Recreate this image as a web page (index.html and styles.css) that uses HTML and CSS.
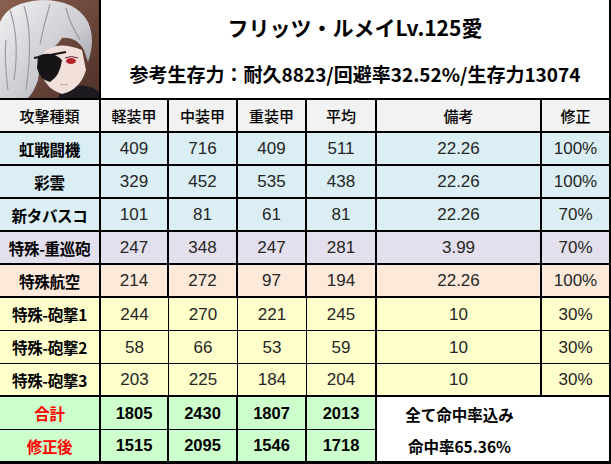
FILE: index.html
```html
<!DOCTYPE html>
<html lang="ja">
<head>
<meta charset="utf-8">
<title>フリッツ・ルメイ</title>
<link rel="stylesheet" href="styles.css">
</head>
<body>
<div class="sheet">
  <div class="top">
    <div class="portrait">
      <svg viewBox="0 0 99 98" width="99" height="98" aria-hidden="true">
        <defs>
          <linearGradient id="bg" x1="0" y1="0" x2="1" y2="1">
            <stop offset="0" stop-color="#8a6050"/>
            <stop offset="1" stop-color="#4e3128"/>
          </linearGradient>
          <linearGradient id="hair" x1="0" y1="0" x2="1" y2="1">
            <stop offset="0" stop-color="#f2f2f4"/>
            <stop offset="0.6" stop-color="#c9c9cf"/>
            <stop offset="1" stop-color="#8d8d96"/>
          </linearGradient>
        </defs>
        <rect width="99" height="98" fill="url(#bg)"/>
        <path d="M58 98 Q62 88 74 86 Q90 84 99 92 L99 98 Z" fill="#1d1b1f"/>
        <path d="M40 52 Q58 40 82 50 L86 70 Q80 90 62 94 Q48 90 42 76 Z" fill="#f1dfd9"/>
        <path d="M0 98 L0 22 Q8 2 42 0 Q76 0 88 22 Q96 40 88 62 L84 50 Q76 36 62 38 Q56 48 46 50 Q40 62 38 80 Q34 92 28 98 Z" fill="url(#hair)"/>
        <path d="M10 10 Q20 40 14 80 M24 6 Q34 36 26 90 M50 4 Q44 24 40 44 M66 8 Q70 24 80 40 M6 40 Q4 60 8 90" stroke="#9a9aa2" stroke-width="1.2" fill="none"/>
        <path d="M38 56 Q52 50 62 60 Q60 76 50 82 Q40 80 37 68 Z" fill="#161416"/>
        <path d="M34 58 L66 52" stroke="#161416" stroke-width="2"/>
        <ellipse cx="71" cy="61" rx="5" ry="3" fill="#b8232b"/>
        <path d="M65 58 Q71 55 78 58" stroke="#5a2a2a" stroke-width="1" fill="none"/>
        <path d="M60 84 Q64 86 68 84" stroke="#c99a94" stroke-width="1" fill="none"/>
      </svg>
    </div>
    <div class="info">
      <div class="title">フリッツ・ルメイLv.125愛</div>
      <div class="sub">参考生存力：耐久8823/回避率32.52%/生存力13074</div>
    </div>
  </div>

  <div class="grid">
    <div class="row head">
      <div class="c">攻撃種類</div><div class="c">軽装甲</div><div class="c">中装甲</div><div class="c">重装甲</div><div class="c">平均</div><div class="c">備考</div><div class="c">修正</div>
    </div>
    <div class="row blue">
      <div class="c label">虹戦闘機</div><div class="c n">409</div><div class="c n">716</div><div class="c n">409</div><div class="c n">511</div><div class="c n">22.26</div><div class="c n">100%</div>
    </div>
    <div class="row blue">
      <div class="c label">彩雲</div><div class="c n">329</div><div class="c n">452</div><div class="c n">535</div><div class="c n">438</div><div class="c n">22.26</div><div class="c n">100%</div>
    </div>
    <div class="row blue">
      <div class="c label">新タバスコ</div><div class="c n">101</div><div class="c n">81</div><div class="c n">61</div><div class="c n">81</div><div class="c n">22.26</div><div class="c n">70%</div>
    </div>
    <div class="row purple">
      <div class="c label">特殊-重巡砲</div><div class="c n">247</div><div class="c n">348</div><div class="c n">247</div><div class="c n">281</div><div class="c n">3.99</div><div class="c n">70%</div>
    </div>
    <div class="row orange">
      <div class="c label">特殊航空</div><div class="c n">214</div><div class="c n">272</div><div class="c n">97</div><div class="c n">194</div><div class="c n">22.26</div><div class="c n">100%</div>
    </div>
    <div class="row yellow thin">
      <div class="c label">特殊-砲撃1</div><div class="c n in">244</div><div class="c n in">270</div><div class="c n in">221</div><div class="c n">245</div><div class="c n">10</div><div class="c n">30%</div>
    </div>
    <div class="row yellow thin">
      <div class="c label">特殊-砲撃2</div><div class="c n in">58</div><div class="c n in">66</div><div class="c n in">53</div><div class="c n">59</div><div class="c n">10</div><div class="c n">30%</div>
    </div>
    <div class="row yellow">
      <div class="c label">特殊-砲撃3</div><div class="c n in">203</div><div class="c n in">225</div><div class="c n in">184</div><div class="c n">204</div><div class="c n">10</div><div class="c n">30%</div>
    </div>
    <div class="row green thin">
      <div class="c label red">合計</div><div class="c b">1805</div><div class="c b">2430</div><div class="c b">1807</div><div class="c b">2013</div><div class="c note">全て命中率込み</div><div class="c blank"></div>
    </div>
    <div class="row green last">
      <div class="c label red">修正後</div><div class="c b">1515</div><div class="c b">2095</div><div class="c b">1546</div><div class="c b">1718</div><div class="c note">命中率65.36%</div><div class="c blank"></div>
    </div>
  </div>
</div>
</body>
</html>
```

FILE: styles.css
```css
* { box-sizing: border-box; }

html, body {
  margin: 0;
  padding: 0;
  background: #ffffff;
}

.sheet {
  width: 611px;
  font-family: "Noto Sans CJK JP", "Noto Sans", sans-serif;
  color: #000;
}

.top {
  display: flex;
  height: 100px;
  border-bottom: 2px solid #000;
}

.portrait {
  width: 101px;
  height: 98px;
  border-right: 2px solid #000;
  overflow: hidden;
}

.portrait svg {
  display: block;
}

.info {
  flex: 1;
  border-right: 2px solid #000;
  background: #fff;
  display: flex;
  flex-direction: column;
  align-items: center;
  padding-top: 12px;
  gap: 17px;
}

.title {
  font-size: 21px;
  font-weight: 700;
  line-height: 30px;
}

.sub {
  font-size: 19px;
  font-weight: 700;
  line-height: 30px;
}

.grid {
  display: grid;
  grid-template-columns: 101px 68px 69px 69px 70px 165px 69px;
  grid-template-rows: repeat(10, 33px) 34px;
}

.row {
  display: contents;
}

.c {
  display: flex;
  align-items: center;
  justify-content: center;
  border-right: 2px solid #000;
  border-bottom: 2px solid #000;
  white-space: nowrap;
  overflow: hidden;
}

.head .c {
  background: #f2f2f2;
  font-size: 15px;
  font-weight: 500;
}

.blue .c { background: #daeef3; }
.purple .c { background: #e4dfec; }
.orange .c { background: #fde9d9; }
.yellow .c { background: #ffffcc; }
.green .c { background: #ccffcc; }

.label {
  font-size: 15.5px;
  font-weight: 700;
  letter-spacing: -0.3px;
}

.red {
  color: #ff0000;
}

.n {
  font-family: "Liberation Sans Narrow", "Liberation Sans", sans-serif;
  font-size: 17px;
  color: #262626;
  padding-top: 1px;
}

.b {
  font-family: "Liberation Sans", sans-serif;
  font-size: 16.5px;
  font-weight: 700;
}

.yellow .in {
  border-right-width: 1px;
}

.thin .c {
  border-bottom-width: 1px;
}

.green .note,
.green .blank {
  background: #fff;
}

.note {
  border-right: none;
  font-size: 15.5px;
  font-weight: 700;
}

.green.thin .note,
.green.thin .blank {
  border-bottom: none;
}

.last .c {
  border-bottom-width: 3px;
}
```
